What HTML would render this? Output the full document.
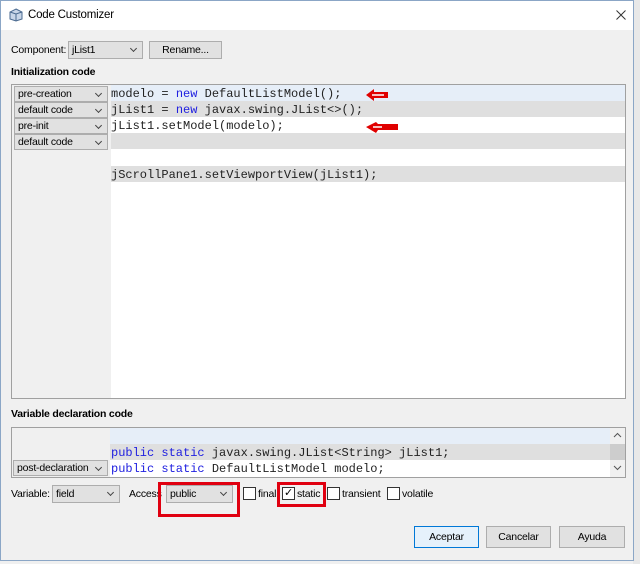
<!DOCTYPE html>
<html><head><meta charset="utf-8"><style>
*{box-sizing:border-box;margin:0;padding:0}
body{width:640px;height:564px;position:relative;overflow:hidden;background:#f0f0f0;font-family:"Liberation Sans",sans-serif;font-size:10.5px;color:#000;letter-spacing:-0.2px}
.a{position:absolute}
.combo{position:absolute;background:#e1e1e1;border:1px solid #adadad;height:16px;line-height:14px;padding-left:3px;font-size:10.5px;white-space:nowrap}
.combo:after{content:"";position:absolute;right:6px;top:4px;width:4px;height:4px;border-right:1px solid #444;border-bottom:1px solid #444;transform:rotate(45deg)}
.btn{position:absolute;background:#e1e1e1;border:1px solid #adadad;height:22px;line-height:20px;text-align:center;font-size:10.5px}
.code{position:absolute;left:111px;font-family:"Liberation Mono",monospace;font-size:12px;line-height:16px;white-space:pre;height:16px;color:#222;letter-spacing:0}
.kw{color:#2020e0}
.cb{position:absolute;width:13px;height:13px;border:1px solid #333;background:#fff}
</style></head><body>
<div class="a" style="left:633px;top:0;width:7px;height:564px;background:#e8e8e8"></div>
<div class="a" style="left:0;top:0;width:634px;height:561px;border:1px solid #8ba6c6;background:#f0f0f0"></div>
<div class="a" style="left:1px;top:1px;width:632px;height:29px;background:#fff"></div>
<svg class="a" style="left:9px;top:8px" width="14" height="14" viewBox="0 0 14 14"><path d="M7 1 L13 4 L13 11 L7 13 L1 11 L1 4 Z" fill="#c8d6e8" stroke="#4a6a90"/><path d="M1 4 L7 6 L13 4 M7 6 L7 13" fill="none" stroke="#4a6a90"/></svg>
<div class="a" style="left:28px;top:9px;font-size:11.5px">Code Customizer</div>
<svg class="a" style="left:616px;top:10px" width="10" height="10"><path d="M0.5 0.5 L9.5 9.5 M9.5 0.5 L0.5 9.5" stroke="#333" stroke-width="1"/></svg>

<div class="a" style="left:11px;top:44px">Component:</div>
<div class="combo" style="left:68px;top:41px;width:75px;height:18px;line-height:16px">jList1</div>
<div class="btn" style="left:149px;top:41px;width:73px;height:18px;line-height:16px">Rename...</div>
<div class="a" style="left:11px;top:66px;font-weight:bold">Initialization code</div>

<div class="a" style="left:11px;top:84px;width:615px;height:315px;border:1px solid #a0a0a0;background:#fff"></div>
<div class="a" style="left:12px;top:85px;width:99px;height:313px;background:#f0f0f0"></div>
<div class="a" style="left:111px;top:85px;width:514px;height:16px;background:#e6eef8"></div>
<div class="a" style="left:111px;top:101px;width:514px;height:16px;background:#dfdfdf"></div>
<div class="a" style="left:111px;top:133px;width:514px;height:16px;background:#dfdfdf"></div>
<div class="a" style="left:111px;top:166px;width:514px;height:16px;background:#dfdfdf"></div>
<div class="combo" style="left:14px;top:86px;width:94px">pre-creation</div>
<div class="combo" style="left:14px;top:102px;width:94px">default code</div>
<div class="combo" style="left:14px;top:118px;width:94px">pre-init</div>
<div class="combo" style="left:14px;top:134px;width:94px">default code</div>
<div class="code" style="top:86px">modelo = <span class="kw">new</span> DefaultListModel();</div>
<div class="code" style="top:102px">jList1 = <span class="kw">new</span> javax.swing.JList&lt;&gt;();</div>
<div class="code" style="top:118px">jList1.setModel(modelo);</div>
<div class="code" style="top:167px">jScrollPane1.setViewportView(jList1);</div>
<svg class="a" style="left:364px;top:87px" width="26" height="16"><path d="M2 8 L10 2 L10 5 L24 5 L24 11 L10 11 L10 14 Z" fill="#e00000"/><path d="M8 8 L20 8" stroke="#fff" stroke-width="1.5"/></svg>
<svg class="a" style="left:364px;top:121px" width="36" height="13"><path d="M2 6 L12 1 L14 3 L34 3 L34 9 L14 9 L12 12 Z" fill="#e00000"/><path d="M9 6 L18 6" stroke="#fff" stroke-width="1.5"/></svg>

<div class="a" style="left:11px;top:408px;font-weight:bold">Variable declaration code</div>
<div class="a" style="left:11px;top:427px;width:615px;height:51px;border:1px solid #a0a0a0;background:#fff"></div>
<div class="a" style="left:12px;top:428px;width:98px;height:49px;background:#f0f0f0"></div>
<div class="a" style="left:110px;top:428px;width:500px;height:16px;background:#e6eef8"></div>
<div class="a" style="left:110px;top:444px;width:500px;height:16px;background:#dfdfdf"></div>
<div class="a" style="left:610px;top:428px;width:15px;height:49px;background:#f0f0f0"></div>
<div class="a" style="left:610px;top:444px;width:15px;height:16px;background:#cdcdcd"></div>
<svg class="a" style="left:613px;top:432px" width="9" height="6"><path d="M1 5 L4.5 1.5 L8 5" fill="none" stroke="#555"/></svg>
<svg class="a" style="left:613px;top:465px" width="9" height="6"><path d="M1 1 L4.5 4.5 L8 1" fill="none" stroke="#555"/></svg>
<div class="combo" style="left:13px;top:460px;width:95px">post-declaration</div>
<div class="code" style="top:445px;left:111px"><span class="kw">public static</span> javax.swing.JList&lt;String&gt; jList1;</div>
<div class="code" style="top:461px;left:111px"><span class="kw">public static</span> DefaultListModel modelo;</div>

<div class="a" style="left:11px;top:488px">Variable:</div>
<div class="combo" style="left:52px;top:485px;width:68px;height:18px;line-height:16px">field</div>
<div class="a" style="left:129px;top:488px">Access</div>
<div class="combo" style="left:166px;top:485px;width:67px;height:18px;line-height:16px">public</div>
<div class="a" style="left:158px;top:482px;width:82px;height:35px;border:3px solid #e00010"></div>
<div class="cb" style="left:243px;top:487px"></div>
<div class="a" style="left:258px;top:488px">final</div>
<div class="a" style="left:277px;top:482px;width:49px;height:25px;border:3px solid #e00010"></div>
<div class="cb" style="left:282px;top:487px;font-size:11px;line-height:11px;text-align:center">✓</div>
<div class="a" style="left:297px;top:488px">static</div>
<div class="cb" style="left:327px;top:487px"></div>
<div class="a" style="left:342px;top:488px">transient</div>
<div class="cb" style="left:387px;top:487px"></div>
<div class="a" style="left:402px;top:488px">volatile</div>

<div class="btn" style="left:414px;top:526px;width:65px;background:#e5f1fb;border-color:#0078d7">Aceptar</div>
<div class="btn" style="left:486px;top:526px;width:65px">Cancelar</div>
<div class="btn" style="left:559px;top:526px;width:66px">Ayuda</div>
</body></html>
